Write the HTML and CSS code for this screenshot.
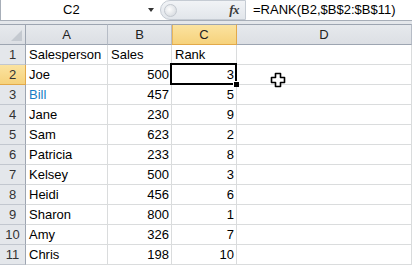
FILE: index.html
```html
<!DOCTYPE html>
<html>
<head>
<meta charset="utf-8">
<link rel="stylesheet" href="styles.css">
</head>
<body>
<div class="fbar">
  <div class="namebox"><span class="name">C2</span><span class="arrow"></span></div>
  <div class="fxzone"><span class="knob"></span><span class="fx">fx</span></div>
  <div class="formula">=RANK(B2,$B$2:$B$11)</div>
</div>
<div class="band"></div>
<div class="sheet">
  <div class="hd corner"><span class="tri"></span></div>
  <div class="hd col">A</div>
  <div class="hd col">B</div>
  <div class="hd col sel">C</div>
  <div class="hd col">D</div>

  <div class="rh">1</div><div class="c">Salesperson</div><div class="c">Sales</div><div class="c">Rank</div><div class="c"></div>
  <div class="rh sel">2</div><div class="c">Joe</div><div class="c n">500</div><div class="c n active">3<span class="outline"></span><span class="handle"></span></div><div class="c"></div>
  <div class="rh">3</div><div class="c link">Bill</div><div class="c n">457</div><div class="c n">5</div><div class="c"></div>
  <div class="rh">4</div><div class="c">Jane</div><div class="c n">230</div><div class="c n">9</div><div class="c"></div>
  <div class="rh">5</div><div class="c">Sam</div><div class="c n">623</div><div class="c n">2</div><div class="c"></div>
  <div class="rh">6</div><div class="c">Patricia</div><div class="c n">233</div><div class="c n">8</div><div class="c"></div>
  <div class="rh">7</div><div class="c">Kelsey</div><div class="c n">500</div><div class="c n">3</div><div class="c"></div>
  <div class="rh">8</div><div class="c">Heidi</div><div class="c n">456</div><div class="c n">6</div><div class="c"></div>
  <div class="rh">9</div><div class="c">Sharon</div><div class="c n">800</div><div class="c n">1</div><div class="c"></div>
  <div class="rh">10</div><div class="c">Amy</div><div class="c n">326</div><div class="c n">7</div><div class="c"></div>
  <div class="rh">11</div><div class="c">Chris</div><div class="c n">198</div><div class="c n">10</div><div class="c"></div>
</div>
<svg class="cursor" width="17" height="17" viewBox="0 0 17 17">
  <path d="M5.5 1.5h5v4h4v5h-4v4h-5v-4h-4v-5h4z" fill="#fff" stroke="#000" stroke-width="1.6" stroke-linejoin="round"/>
</svg>
</body>
</html>
```

FILE: styles.css
```css
html, body {
  margin: 0;
  padding: 0;
  background: #fff;
  width: 412px;
  height: 266px;
  overflow: hidden;
  font-family: "Liberation Sans", Arial, sans-serif;
  font-size: 13px;
  color: #000;
}

.fbar {
  display: flex;
  height: 21px;
  box-sizing: border-box;
  border-bottom: 1px solid #a7aeb8;
  border-left: 1px solid #a7aeb8;
  background: #fff;
}

.namebox {
  width: 159px;
  display: flex;
  align-items: center;
}

.name {
  margin-left: 62px;
  line-height: 20px;
}

.arrow {
  margin-left: auto;
  margin-right: 6px;
  width: 0;
  height: 0;
  border-left: 3.5px solid transparent;
  border-right: 3.5px solid transparent;
  border-top: 4px solid #333;
}

.fxzone {
  width: 86px;
  background: linear-gradient(#f1f3f6, #e2e6eb);
  border-radius: 10px 0 0 10px;
  border: 1px solid #c5cbd3;
  box-sizing: border-box;
  height: 20px;
  display: flex;
  align-items: center;
}

.knob {
  width: 11px;
  height: 11px;
  border-radius: 50%;
  background: radial-gradient(circle at 40% 40%, #fdfdfd, #cfd4da);
  border: 1px solid #c3c8cf;
  margin-left: 3px;
}

.fx {
  margin-left: auto;
  margin-right: 6px;
  font-family: "Liberation Serif", "Times New Roman", serif;
  font-style: italic;
  font-weight: bold;
  font-size: 13px;
  color: #3a3a3a;
  letter-spacing: -0.5px;
}

.formula {
  padding-left: 7px;
  line-height: 20px;
}

.band {
  height: 3px;
  background: #e4e7eb;
}

.sheet {
  display: grid;
  grid-template-columns: 26px 82px 64px 65px 1fr;
  grid-template-rows: 21px repeat(11, 20px);
}

.hd {
  box-sizing: border-box;
  border-top: 1px solid #9da5b1;
  border-bottom: 1px solid #9da5b1;
  border-right: 1px solid #b6bcc6;
  background: linear-gradient(#e6e9ed, #dcdfe4);
  text-align: center;
  line-height: 19px;
  color: #222;
}

.hd.sel {
  background: linear-gradient(#fbe3a0, #f6d27c);
  border-right-color: #e2a94a;
  border-bottom-color: #e2a94a;
  box-shadow: inset 1px 0 0 #e9b65a;
}

.corner {
  position: relative;
  border-right-color: #9da5b1;
}

.tri {
  position: absolute;
  right: 3px;
  bottom: 3px;
  width: 0;
  height: 0;
  border-left: 11px solid transparent;
  border-bottom: 11px solid #c4c9d0;
}

.rh {
  box-sizing: border-box;
  border-right: 1px solid #9da5b1;
  border-bottom: 1px solid #c2c7cf;
  background: #e4e7eb;
  text-align: center;
  line-height: 20px;
  color: #333;
}

.rh.sel {
  background: linear-gradient(#fbe3a0, #f6d27c);
  border-right-color: #e2a94a;
  border-bottom-color: #e2a94a;
}

.c {
  box-sizing: border-box;
  border-right: 1px solid #dadcdd;
  border-bottom: 1px solid #dadcdd;
  padding: 0 2px 0 3px;
  line-height: 20px;
  white-space: nowrap;
  overflow: hidden;
}

.n {
  text-align: right;
}

.link {
  color: #1a7cc4;
}

.active {
  position: relative;
  overflow: visible;
}

.outline {
  position: absolute;
  left: -2px;
  top: -2px;
  right: -1px;
  bottom: -1px;
  border: 2px solid #000;
  pointer-events: none;
}

.handle {
  position: absolute;
  right: -3px;
  bottom: -3px;
  width: 5px;
  height: 5px;
  background: #000;
  border: 1px solid #fff;
  border-right: 0;
  border-bottom: 0;
}

.cursor {
  position: absolute;
  left: 270px;
  top: 72px;
}
```
